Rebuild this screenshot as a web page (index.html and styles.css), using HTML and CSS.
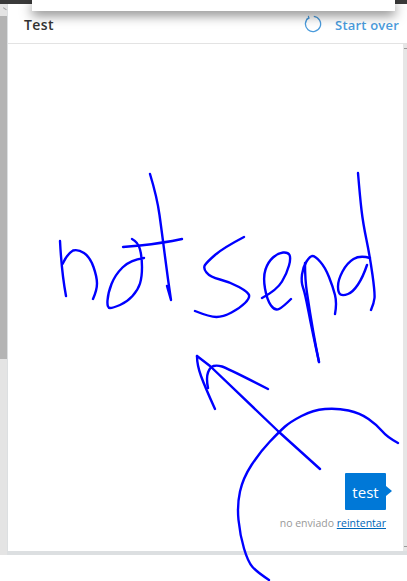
FILE: index.html
```html
<!DOCTYPE html>
<html lang="es">
<head>
<meta charset="utf-8">
<title>Test</title>
<link rel="stylesheet" href="styles.css">
</head>
<body>
<div class="page">
  <div class="topline"></div>
  <div class="modal"></div>
  <div class="main">
    <div class="rail"><div class="rail-top"><span class="rail-arrow"></span></div><div class="rail-thumb"></div></div>
    <div class="panel">
      <header class="head">
        <span class="title">Test</span>
        <div class="action">
          <svg class="refresh" width="18" height="18" viewBox="0 0 18 18" aria-hidden="true"><path d="M5 2.5A7.6 7.6 0 1 0 9.8 1.4" fill="none" stroke="#4a9bdc" stroke-width="1.3"/><path d="M4.3 .8 L5 3.2 L2.2 4.6" fill="none" stroke="#4a9bdc" stroke-width="1.2"/></svg>
          <span class="start">Start over</span>
        </div>
      </header>
      <div class="body">
        <div class="chat">
          <div class="bubble">test</div>
          <div class="status">no enviado <a href="#">reintentar</a></div>
        </div>
        <div class="scroll"><span class="scroll-up"></span><span class="scroll-down"></span></div>
      </div>
    </div>
  </div>
  <svg class="ink" width="407" height="581" viewBox="0 0 407 581" aria-hidden="true">
    <g fill="none" stroke="#0000ff" stroke-width="2.4" stroke-linecap="round" stroke-linejoin="round">
      <path d="M60 241C61 260 63 280 66 296"/>
      <path d="M62.5 264Q67 254 73 250.5Q78 249 84 253Q90 257 93.5 267Q97 277 97 283.5Q97 290 93 299"/>
      <path d="M132 239Q138 242 140 249.5Q142 257 142 267Q142 277 140 283.5Q138 290 132.5 296Q127 302 120 305Q113 308 110 308Q107 308 107.5 300.5Q108 293 111.5 284Q115 275 122.5 267.5Q130 260 144 258"/>
      <path d="M123 247L140 245.5Q163 243 182 239"/>
      <path d="M150 174Q157 197 159.5 215Q162 233 165 256.5Q168 280 171 300L167 286"/>
      <path d="M244 237Q223 248 215 255Q207 262 205 265Q203 268 206.5 272.5Q210 277 220 279.5Q230 282 239 287Q248 292 249 295Q250 298 245 303Q240 308 231.5 312.5Q223 317 216.5 317Q210 317 195 311"/>
      <path d="M262 298Q277 290 282 281.5Q287 273 289 265.5Q291 258 289.5 255Q288 252 283 252.5Q278 253 273 257.5Q268 262 265.5 269.5Q263 277 265 288.5Q267 300 271 305.5Q275 311 279 309Q283 307 291 299"/>
      <path d="M319 362Q312 330 308.5 311.5Q305 293 303 287.5Q301 282 302 274.5Q303 267 306.5 261.5Q310 256 312.5 256Q315 256 320 261.5Q325 267 329 277Q333 287 335 295Q337 303 335 314"/>
      <path d="M305 263Q305 280 307 293Q313 333 319 362"/>
      <path d="M358 173Q360 197 361.5 210Q363 223 366.5 240Q370 257 372.5 275Q375 293 374.5 298Q374 303 371 310"/>
      <path d="M367 265Q363 277 358 284.5Q353 292 348 294Q343 296 340.5 294.5Q338 293 338 286.5Q338 280 342.5 271.5Q347 263 353.5 259Q360 255 370 258"/>
      <path d="M320 469L279 432L210 366L197 356"/>
      <path d="M197 356Q197 365 201 376Q205 387 215 409"/>
      <path d="M208 388Q206 378 208 372.5Q210 367 213.5 366Q217 365 222 366.5Q227 368 268 389"/>
      <path d="M398 443Q387 437 382 431Q377 425 368.5 419Q360 413 348.5 410.5Q337 408 325 409Q313 410 301.5 416Q290 422 284.5 427Q279 432 269.5 442Q260 452 251.5 465Q243 478 240 491.5Q237 505 238.5 520Q240 535 244 548.5Q248 562 252.5 567Q257 572 269 580"/>
    </g>
  </svg>
</div>
</body>
</html>
```
FILE: styles.css
```css
* { box-sizing: border-box; }
html, body { margin: 0; padding: 0; background: #fff; }
body { font-family: "Open Sans", "Liberation Sans", sans-serif; }
.page { position: relative; width: 407px; height: 581px; overflow: hidden; background: #fff; }
.topline { position: absolute; top: 0; left: 0; right: 0; height: 4px; background: #3a3a3a; }
.modal {
  position: absolute; top: 0; left: 32px; width: 363px; height: 11px;
  background: #fff; box-shadow: 0 4px 12px rgba(0,0,0,.5);
}
.main { display: flex; height: 555px; }
.rail { width: 7px; flex: none; background: #e4e4e4; padding-top: 4px; }
.rail-top { height: 12px; display: flex; align-items: center; justify-content: center; }
.rail-arrow { width: 4px; height: 4px; border-top: 1px solid #a0a0a0; transform: rotate(35deg); }
.rail-thumb { height: 343px; background: #b4b4b4; }
.panel {
  flex: 1; min-width: 0; display: flex; flex-direction: column;
  border-left: 1px solid #dcdfe1; border-bottom: 4px solid #dcdfe1;
  margin-top: 4px;
}
.head {
  height: 40px; flex: none; display: flex; align-items: center; justify-content: space-between;
  padding: 3px 8px 1px 16px; border-bottom: 1px solid #e3e3e3;
}
.title { font-size: 14px; font-weight: 600; color: #333; letter-spacing: .4px; }
.action { display: flex; align-items: center; gap: 13px; }
.refresh { display: block; margin-top: -2px; }
.start { font-size: 13px; font-weight: 600; color: #4a9bdc; letter-spacing: .2px; }
.body { flex: 1; min-height: 0; display: flex; }
.chat {
  flex: 1; display: flex; flex-direction: column; align-items: flex-end; justify-content: flex-end;
  gap: 6px; padding: 0 17px 21px 0;
}
.scroll {
  width: 4px; flex: none; background: #e6e6e6; padding: 4px 0;
  display: flex; flex-direction: column; justify-content: space-between; align-items: center;
}
.scroll-up, .scroll-down { width: 3px; height: 1px; background: #9a9a9a; }
.bubble {
  position: relative; width: 41px; height: 37px; background: #0078d7; color: #fff;
  border-radius: 1px; font-size: 15px; display: flex; align-items: center; justify-content: center;
}
.bubble::after {
  content: ""; position: absolute; left: 100%; top: 13px;
  border-left: 6px solid #0078d7; border-top: 5px solid transparent; border-bottom: 5px solid transparent;
}
.status { font-size: 10.5px; color: #999; line-height: 14px; }
.status a { color: #0067b8; text-decoration: underline; }
.ink { position: absolute; inset: 0; pointer-events: none; }
```
